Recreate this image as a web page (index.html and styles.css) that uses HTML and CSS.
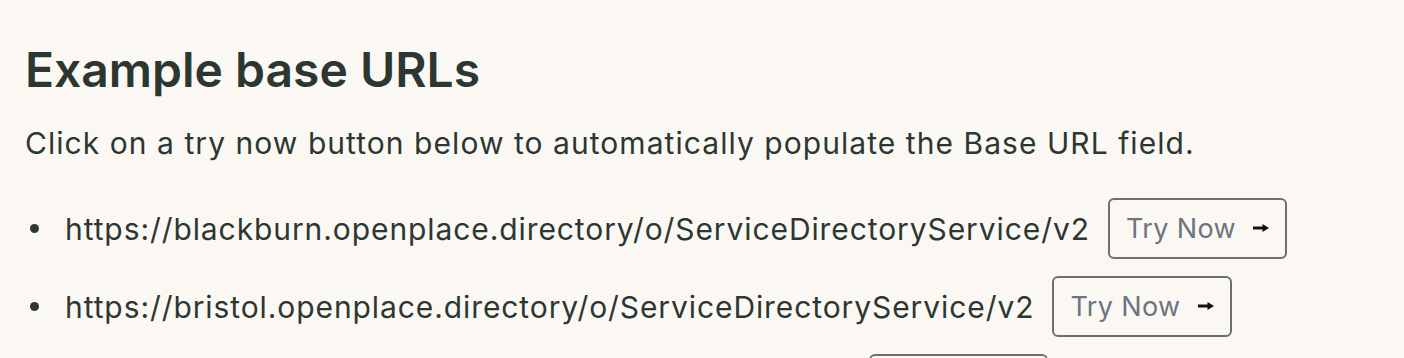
FILE: index.html
```html
<!DOCTYPE html>
<html lang="en">
<head>
<meta charset="utf-8">
<title>Example base URLs</title>
<link rel="stylesheet" href="styles.css">
</head>
<body>
<main class="page">
  <h2 class="title">Example base URLs</h2>
  <p class="intro">Click on a try now button below to automatically populate the Base URL field.</p>
  <ul class="urls">
    <li class="url-item"><span class="url">https://blackburn.openplace.directory/o/ServiceDirectoryService/v2</span><button class="try" type="button">Try Now<svg class="arrow" viewBox="0 0 16 8" width="16" height="8" aria-hidden="true"><path d="M0 2.5h9.5V0L16 4l-6.5 4V5.5H0z" fill="#111"/></svg></button></li>
    <li class="url-item"><span class="url">https://bristol.openplace.directory/o/ServiceDirectoryService/v2</span><button class="try" type="button">Try Now<svg class="arrow" viewBox="0 0 16 8" width="16" height="8" aria-hidden="true"><path d="M0 2.5h9.5V0L16 4l-6.5 4V5.5H0z" fill="#111"/></svg></button></li>
    <li class="url-item"><span class="url">https://api.familyinfo.buckinghamshire.gov.uk/api/v1</span><button class="try" type="button">Try Now<svg class="arrow" viewBox="0 0 16 8" width="16" height="8" aria-hidden="true"><path d="M0 2.5h9.5V0L16 4l-6.5 4V5.5H0z" fill="#111"/></svg></button></li>
  </ul>
</main>
</body>
</html>
```
FILE: styles.css
```css
html, body {
  margin: 0;
  padding: 0;
  background: #fbf8f4;
}
body {
  font-family: Inter, "Noto Sans", sans-serif;
  color: #2c3732;
}
.page {
  padding: 41px 25px 0 25px;
}
.title {
  margin: 0;
  font-size: 48px;
  line-height: 1.2;
  font-weight: 600;
}
.intro {
  margin: 23px 0 0 0;
  font-size: 30px;
  line-height: 42px;
  letter-spacing: 1.05px;
}
.urls {
  margin: 34px 0 0 0;
  padding: 0;
  list-style: none;
  font-size: 30px;
  letter-spacing: 0.91px;
}
.url-item {
  display: flex;
  align-items: center;
  margin: 0 0 17px 0;
}
.url-item::before {
  content: "";
  flex: none;
  width: 9px;
  height: 9px;
  margin: 0 26px 0 5px;
  border-radius: 50%;
  background: #2c3732;
}
.url {
  line-height: 34px;
  padding-top: 1px;
}
.try {
  display: inline-flex;
  align-items: center;
  gap: 17px;
  flex: none;
  box-sizing: border-box;
  height: 61px;
  margin-left: 18px;
  padding: 0 16px 0 16px;
  border: 2px solid #6b7076;
  border-radius: 6px;
  background: transparent;
  color: #6b7480;
  font-family: Inter, "Noto Sans", sans-serif;
  font-size: 27px;
  letter-spacing: 0.4px;
  line-height: 1;
}
.arrow {
  display: block;
  width: 16px;
  height: 8px;
}
```
